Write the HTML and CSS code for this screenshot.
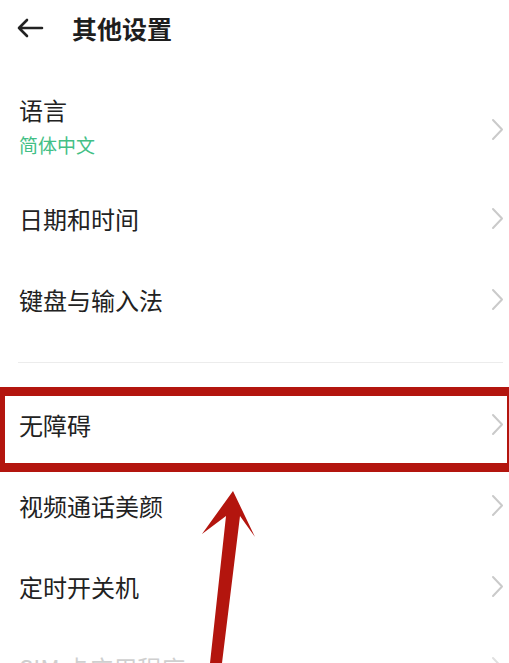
FILE: index.html
```html
<!DOCTYPE html>
<html lang="zh-CN">
<head>
<meta charset="utf-8">
<title>其他设置</title>
<link rel="stylesheet" href="styles.css">
</head>
<body>
<div class="page">
  <header class="topbar">
    <svg class="back" width="28" height="20" viewBox="0 0 28 20" aria-hidden="true">
      <path d="M26 10H3M11 2L3 10L11 18" fill="none" stroke="#222" stroke-width="2.6" stroke-linecap="round" stroke-linejoin="round"/>
    </svg>
    <h1 class="title">其他设置</h1>
  </header>

  <ul class="list">
    <li class="row row-tall">
      <div class="texts">
        <span class="label">语言</span>
        <span class="sub">简体中文</span>
      </div>
      <svg class="chev" width="13" height="23" viewBox="0 0 13 23" aria-hidden="true"><path d="M2 2L11 11.5L2 21" fill="none" stroke="#cacaca" stroke-width="2" stroke-linecap="round" stroke-linejoin="round"/></svg>
    </li>
    <li class="row">
      <span class="label">日期和时间</span>
      <svg class="chev" width="13" height="23" viewBox="0 0 13 23" aria-hidden="true"><path d="M2 2L11 11.5L2 21" fill="none" stroke="#cacaca" stroke-width="2" stroke-linecap="round" stroke-linejoin="round"/></svg>
    </li>
    <li class="row">
      <span class="label">键盘与输入法</span>
      <svg class="chev" width="13" height="23" viewBox="0 0 13 23" aria-hidden="true"><path d="M2 2L11 11.5L2 21" fill="none" stroke="#cacaca" stroke-width="2" stroke-linecap="round" stroke-linejoin="round"/></svg>
    </li>
    <li class="divider" role="separator"></li>
    <li class="row">
      <span class="label">无障碍</span>
      <svg class="chev" width="13" height="23" viewBox="0 0 13 23" aria-hidden="true"><path d="M2 2L11 11.5L2 21" fill="none" stroke="#cacaca" stroke-width="2" stroke-linecap="round" stroke-linejoin="round"/></svg>
    </li>
    <li class="row">
      <span class="label">视频通话美颜</span>
      <svg class="chev" width="13" height="23" viewBox="0 0 13 23" aria-hidden="true"><path d="M2 2L11 11.5L2 21" fill="none" stroke="#cacaca" stroke-width="2" stroke-linecap="round" stroke-linejoin="round"/></svg>
    </li>
    <li class="row">
      <span class="label">定时开关机</span>
      <svg class="chev" width="13" height="23" viewBox="0 0 13 23" aria-hidden="true"><path d="M2 2L11 11.5L2 21" fill="none" stroke="#cacaca" stroke-width="2" stroke-linecap="round" stroke-linejoin="round"/></svg>
    </li>
    <li class="row row-faded">
      <span class="label">SIM 卡应用程序</span>
      <svg class="chev" width="13" height="23" viewBox="0 0 13 23" aria-hidden="true"><path d="M2 2L11 11.5L2 21" fill="none" stroke="#e0e0e0" stroke-width="2" stroke-linecap="round" stroke-linejoin="round"/></svg>
    </li>
  </ul>

  <div class="highlight" aria-hidden="true"></div>
  <svg class="pointer" width="509" height="663" viewBox="0 0 509 663" aria-hidden="true">
    <polygon points="233,491 255,537 240,516 222,663 210,663 226,516 202,534" fill="#b3150e"/>
  </svg>
</div>
</body>
</html>
```

FILE: styles.css
```css
html, body {
  margin: 0;
  padding: 0;
  background: #ffffff;
}

body {
  width: 509px;
  height: 663px;
  overflow: hidden;
  font-family: "Noto Sans CJK SC", "Noto Sans", sans-serif;
  color: #222222;
}

.page {
  position: relative;
  width: 509px;
  height: 663px;
  overflow: hidden;
}

.topbar {
  height: 56px;
  display: flex;
  align-items: center;
  padding-left: 16px;
  gap: 28px;
}

.back {
  display: block;
  flex: none;
}

.title {
  margin: 0;
  font-size: 25px;
  font-weight: 700;
  color: #1e1e1e;
  line-height: 1;
  letter-spacing: 0;
}

.list {
  list-style: none;
  margin: 24px 0 0;
  padding: 0;
}

.row {
  height: 81px;
  display: flex;
  align-items: center;
  justify-content: space-between;
  padding: 0 5px 0 19px;
}

.row-tall {
  height: 98px;
}

.texts {
  display: flex;
  flex-direction: column;
  gap: 8px;
  margin-top: -6px;
}

.label {
  font-size: 24px;
  line-height: 30px;
  color: #222222;
}

.sub {
  font-size: 19px;
  line-height: 24px;
  color: #43bf86;
}

.chev {
  display: block;
  flex: none;
}

.row-faded .label {
  color: #cfcfcf;
}

.divider {
  height: 44px;
  display: flex;
  align-items: center;
  padding: 0 6px 0 18px;
}

.divider::before {
  content: "";
  flex: 1;
  height: 1px;
  background: #ececec;
}

.highlight {
  position: absolute;
  left: -4px;
  top: 387px;
  width: 520px;
  height: 85px;
  box-sizing: border-box;
  border: 9px solid #b3150e;
}

.pointer {
  position: absolute;
  left: 0;
  top: 0;
}
```
